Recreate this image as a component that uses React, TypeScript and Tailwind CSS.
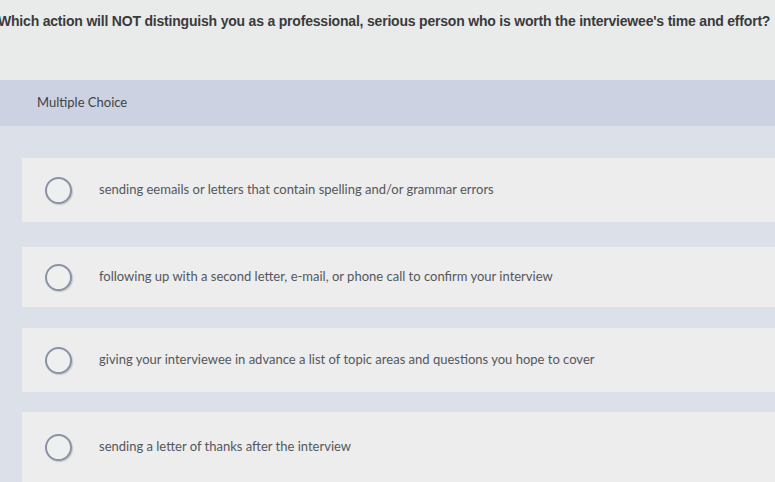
const options = [
  { text: 'sending eemails or letters that contain spelling and/or grammar errors', box: 'h-[64px]' },
  { text: 'following up with a second letter, e-mail, or phone call to confirm your interview', box: 'mt-[25px] h-[60px]' },
  { text: 'giving your interviewee in advance a list of topic areas and questions you hope to cover', box: 'mt-[21px] h-[64px]' },
  { text: 'sending a letter of thanks after the interview', box: 'mt-[20px] h-[70px]' },
]

function Radio() {
  return (
    <span className="block h-[27px] w-[27px] shrink-0 rounded-full border-[2px] border-[#8a93a6] bg-[#eef0ef] shadow-[1px_1px_1px_rgba(120,128,145,0.35)]" />
  )
}

export default function App() {
  return (
    <div className="flex h-[482px] w-[775px] flex-col overflow-hidden bg-[#e9ebea] font-['Liberation_Sans',Arial,sans-serif]">
      <div className="h-[80px] shrink-0 pt-[11px]">
        <h1 className="-ml-[2px] whitespace-nowrap text-[14px] font-bold tracking-[-0.2px] text-[#3a3a3c]">
          Which action will NOT distinguish you as a professional, serious person who is worth the interviewee's time and effort?
        </h1>
      </div>
      <div className="flex h-[46px] shrink-0 items-center bg-[#ccd2e1] pl-[37px]">
        <span className="font-['Lato',sans-serif] text-[13px] text-[#3f4248]">Multiple Choice</span>
      </div>
      <div className="flex flex-1 flex-col bg-[#dce0e8] pl-[22px] pt-[32px]">
        {options.map((o, i) => (
          <div key={i} className={`flex shrink-0 items-center gap-[27px] bg-[#ecedec] pl-[23px] ${o.box}`}>
            <Radio />
            <span className="whitespace-nowrap font-['Lato',sans-serif] text-[13px] text-[#55575c]">
              {o.text}
            </span>
          </div>
        ))}
      </div>
    </div>
  )
}
